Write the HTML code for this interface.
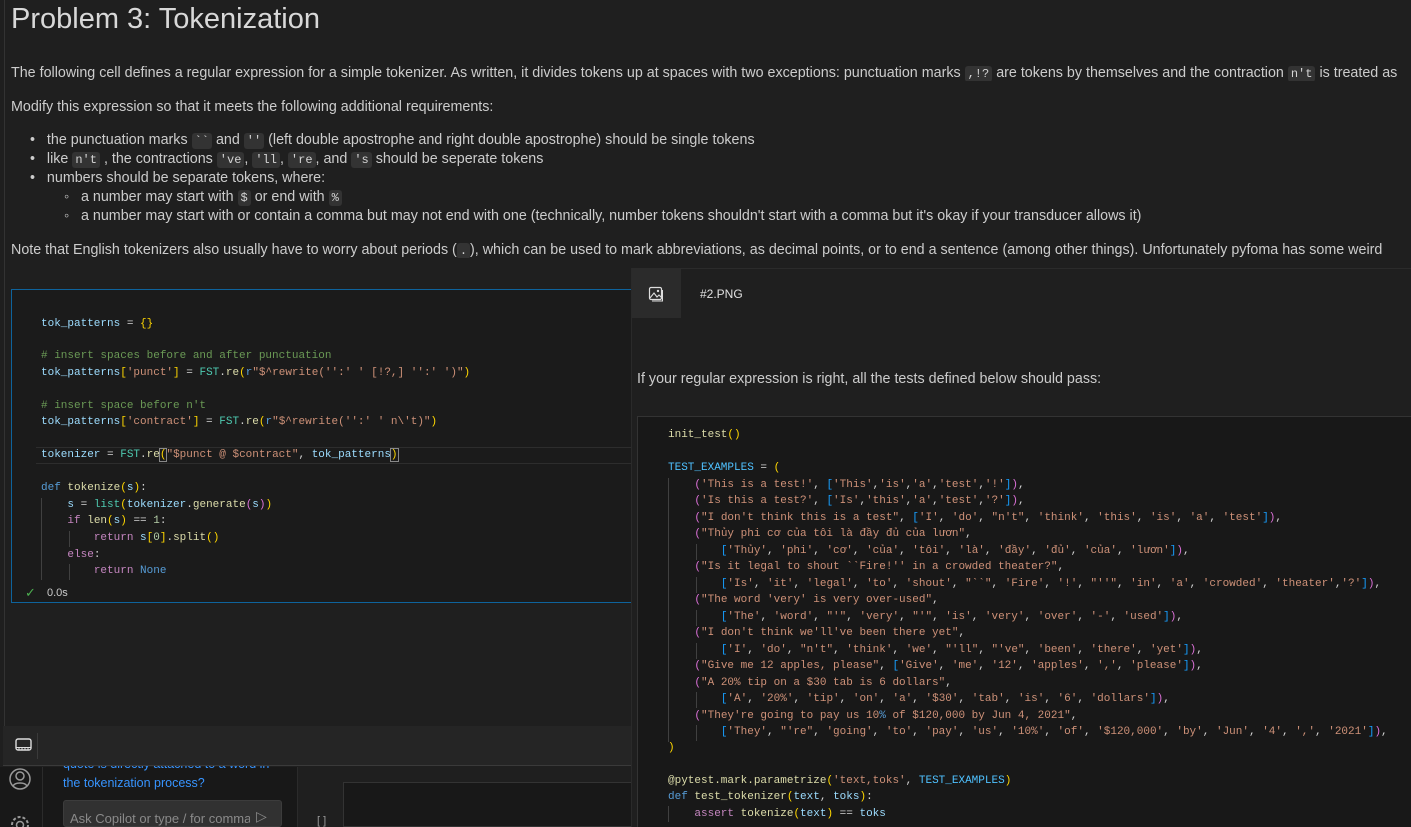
<!DOCTYPE html>
<html><head><meta charset="utf-8"><style>
*{margin:0;padding:0;box-sizing:border-box}
html,body{width:1411px;height:827px;overflow:hidden}
body{background:#1f1f1f;position:relative;font-family:"Liberation Sans",sans-serif;color:#cccccc}
.a{position:absolute;white-space:nowrap}
.p{font-size:14.3px;color:#cccccc}
.clip{width:1400px;overflow:hidden}
code{font-family:"Liberation Mono",monospace;font-size:12px;background:#333;border-radius:3px;padding:1px 3px;color:#d4d4d4}
.c{position:absolute;white-space:pre;font-family:"Liberation Mono","DejaVu Sans Mono",monospace;font-size:11px;line-height:14px;color:#d4d4d4}
.v{color:#9cdcfe}.s{color:#ce9178}.cm{color:#6a9955}.f{color:#dcdcaa}.k{color:#569cd6}.ct{color:#c586c0}.y{color:#ffd700}.pu{color:#da70d6}.b{color:#179fff}.n{color:#b5cea8}.cl{color:#4ec9b0}
.g{position:absolute;width:1px;background:#404040}
</style></head><body>
<div class="a" style="left:4px;top:0;width:1px;height:766px;background:#333"></div>
<div class="a" style="left:11px;top:3px;font-size:29px;color:#d8d8d8">Problem 3: Tokenization</div>
<div class="a p clip" style="left:11px;top:65px">The following cell defines a regular expression for a simple tokenizer. As written, it divides tokens up at spaces with two exceptions: punctuation marks <code>,!?</code> are tokens by themselves and the contraction <code>n't</code> is treated as</div>
<div class="a p" style="left:11px;top:99px">Modify this expression so that it meets the following additional requirements:</div>
<div class="a p" style="left:30px;top:132px">•&nbsp;&nbsp;&nbsp;the punctuation marks <code>``</code> and <code>''</code> (left double apostrophe and right double apostrophe) should be single tokens</div>
<div class="a p" style="left:30px;top:151px">•&nbsp;&nbsp;&nbsp;like <code>n't</code> , the contractions <code>'ve</code>, <code>'ll</code>, <code>'re</code>, and <code>'s</code> should be seperate tokens</div>
<div class="a p" style="left:30px;top:170px">•&nbsp;&nbsp;&nbsp;numbers should be separate tokens, where:</div>
<div class="a p" style="left:64px;top:189px">◦&nbsp;&nbsp;&nbsp;a number may start with <code>$</code> or end with <code>%</code></div>
<div class="a p" style="left:64px;top:208px">◦&nbsp;&nbsp;&nbsp;a number may start with or contain a comma but may not end with one (technically, number tokens shouldn't start with a comma but it's okay if your transducer allows it)</div>
<div class="a p clip" style="left:11px;top:242px">Note that English tokenizers also usually have to worry about periods (<code>.</code>), which can be used to mark abbreviations, as decimal points, or to end a sentence (among other things). Unfortunately pyfoma has some weird</div>

<!-- left code cell -->
<div class="a" style="left:11px;top:289px;width:625px;height:314px;background:#1b1b1b;border:1px solid #0e639c"></div>
<div class="a" style="left:36px;top:447px;width:596px;height:17px;border-top:1px solid #2d2d2d;border-bottom:1px solid #2d2d2d"></div>
<div class="g" style="left:41px;top:498px;height:82px"></div>
<div class="g" style="left:69px;top:531px;height:16px"></div>
<div class="g" style="left:69px;top:564px;height:16px"></div>
<div class="c" style="left:41px;top:317px"><span class="v">tok_patterns</span> = <span class="y">{}</span></div>
<div class="c" style="left:41px;top:349px"><span class="cm"># insert spaces before and after punctuation</span></div>
<div class="c" style="left:41px;top:366px"><span class="v">tok_patterns</span><span class="y">[</span><span class="s">'punct'</span><span class="y">]</span> = <span class="cl">FST</span>.<span class="f">re</span><span class="y">(</span><span class="k">r</span><span class="s">"$^rewrite('':' ' [!?,] '':' ')"</span><span class="y">)</span></div>
<div class="c" style="left:41px;top:399px"><span class="cm"># insert space before n't</span></div>
<div class="c" style="left:41px;top:415px"><span class="v">tok_patterns</span><span class="y">[</span><span class="s">'contract'</span><span class="y">]</span> = <span class="cl">FST</span>.<span class="f">re</span><span class="y">(</span><span class="k">r</span><span class="s">"$^rewrite('':' ' n\'t)"</span><span class="y">)</span></div>
<div class="c" style="left:41px;top:448px"><span class="v">tokenizer</span> = <span class="cl">FST</span>.<span class="f">re</span><span class="y" style="outline:1px solid #888">(</span><span class="s">"$punct @ $contract"</span>, <span class="v">tok_patterns</span><span class="y" style="outline:1px solid #888">)</span></div>
<div class="c" style="left:41px;top:481px"><span class="k">def</span> <span class="f">tokenize</span><span class="y">(</span><span class="v">s</span><span class="y">)</span>:</div>
<div class="c" style="left:41px;top:498px">    <span class="v">s</span> = <span class="cl">list</span><span class="y">(</span><span class="v">tokenizer</span>.<span class="f">generate</span><span class="pu">(</span><span class="v">s</span><span class="pu">)</span><span class="y">)</span></div>
<div class="c" style="left:41px;top:514px">    <span class="ct">if</span> <span class="f">len</span><span class="y">(</span><span class="v">s</span><span class="y">)</span> == <span class="n">1</span>:</div>
<div class="c" style="left:41px;top:531px">        <span class="ct">return</span> <span class="v">s</span><span class="y">[</span><span class="n">0</span><span class="y">]</span>.<span class="f">split</span><span class="y">()</span></div>
<div class="c" style="left:41px;top:548px">    <span class="ct">else</span>:</div>
<div class="c" style="left:41px;top:564px">        <span class="ct">return</span> <span class="k">None</span></div>
<div class="a" style="left:25px;top:585px;font-size:13px;color:#4caf50">✓</div>
<div class="a" style="left:47px;top:587px;font-size:11px;color:#ccc">0.0s</div>

<!-- bottom left -->
<div class="a" style="left:0;top:767px;width:43px;height:60px;background:#181818;border-right:1px solid #2b2b2b"></div>
<svg class="a" style="left:7px;top:766px" width="26" height="26" viewBox="0 0 26 26"><circle cx="13" cy="13" r="10" fill="none" stroke="#999" stroke-width="1.5"/><circle cx="13" cy="10" r="4" fill="none" stroke="#999" stroke-width="1.5"/><path d="M6 20c2-4 12-4 14 0" fill="none" stroke="#999" stroke-width="1.5"/></svg>
<svg class="a" style="left:7px;top:812px" width="26" height="15" viewBox="0 0 26 15"><circle cx="13" cy="13" r="8" fill="none" stroke="#999" stroke-width="2" stroke-dasharray="3 2"/><circle cx="13" cy="13" r="3.5" fill="none" stroke="#999" stroke-width="1.5"/></svg>
<div class="a" style="left:43px;top:767px;width:255px;height:60px;background:#181818;border-right:1px solid #2b2b2b"></div>
<div class="a" style="left:63px;top:757px;font-size:12.5px;color:#3794ff">quote is directly attached to a word in</div>
<div class="a" style="left:63px;top:776px;font-size:12.5px;color:#3794ff">the tokenization process?</div>
<div class="a" style="left:63px;top:800px;width:219px;height:27px;background:#313131;border:1px solid #3c3c3c;border-radius:3px"></div>
<div class="a" style="left:70px;top:811px;font-size:13px;color:#8a8a8a;width:180px;overflow:hidden">Ask Copilot or type / for commands</div>
<div class="a" style="left:256px;top:808px;font-size:14px;color:#8a8a8a">▷</div>
<div class="a" style="left:299px;top:767px;width:333px;height:60px;background:#1f1f1f"></div>
<div class="a" style="left:343px;top:782px;width:289px;height:45px;background:#181818;border:1px solid #333"></div>
<div class="a" style="left:317px;top:815px;font-size:11px;color:#999">[ ]</div>
<div class="a" style="left:3px;top:726px;width:629px;height:40px;background:#252525;border-bottom:1px solid #3a3a3a"></div>
<div class="a" style="left:37px;top:733px;width:1px;height:26px;background:#3a3a3a"></div>
<svg class="a" style="left:15px;top:738px" width="18" height="15" viewBox="0 0 18 15"><rect x="1" y="1" width="15" height="11" rx="2" fill="none" stroke="#ddd" stroke-width="1.4"/><path d="M1 9.5h15M4 9.5v2.5M7 9.5v2.5M10 9.5v2.5M13 9.5v2.5" stroke="#ddd" stroke-width="1"/></svg>

<!-- right panel -->
<div class="a" style="left:631px;top:268px;width:780px;height:559px;background:#1f1f1f;border-top:1px solid #2b2b2b;border-left:1px solid #2a2a2a"></div>
<div class="a" style="left:632px;top:269px;width:49px;height:49px;background:#2b2b2b"></div>
<svg class="a" style="left:648px;top:286px" width="16" height="16" viewBox="0 0 16 16"><rect x="1.5" y="1.5" width="12" height="12" rx="1.5" fill="none" stroke="#ddd" stroke-width="1.2"/><path d="M2 12l4-5 3 4 2-2 3 3" fill="none" stroke="#ddd" stroke-width="1.1"/><circle cx="10" cy="5" r="1.2" fill="#ddd"/><path d="M4 15h10.5V4" fill="none" stroke="#ddd" stroke-width="1"/></svg>
<div class="a" style="left:700px;top:287px;font-size:12px;color:#e0e0e0">#2.PNG</div>
<div class="a p" style="left:637px;top:371px">If your regular expression is right, all the tests defined below should pass:</div>
<div class="a" style="left:637px;top:416px;width:774px;height:411px;background:#181818;border:1px solid #333;border-bottom:none;border-right:none"></div>
<div class="g" style="left:668px;top:478px;height:264px"></div>
<div class="g" style="left:696px;top:544px;height:16px"></div>
<div class="g" style="left:696px;top:577px;height:16px"></div>
<div class="g" style="left:696px;top:610px;height:16px"></div>
<div class="g" style="left:696px;top:643px;height:16px"></div>
<div class="g" style="left:696px;top:692px;height:16px"></div>
<div class="g" style="left:696px;top:725px;height:16px"></div>
<div class="g" style="left:668px;top:806px;height:16px"></div>
<div class="c" style="left:668px;top:428px"><span class="f">init_test</span><span class="y">()</span></div>
<div class="c" style="left:668px;top:461px"><span class="b" style="color:#4fc1ff">TEST_EXAMPLES</span> = <span class="y">(</span></div>
<div class="c" style="left:668px;top:478px">    <span class="pu">(</span><span class="s">'This is a test!'</span>, <span class="b">[</span><span class="s">'This'</span>,<span class="s">'is'</span>,<span class="s">'a'</span>,<span class="s">'test'</span>,<span class="s">'!'</span><span class="b">]</span><span class="pu">)</span>,</div>
<div class="c" style="left:668px;top:494px">    <span class="pu">(</span><span class="s">'Is this a test?'</span>, <span class="b">[</span><span class="s">'Is'</span>,<span class="s">'this'</span>,<span class="s">'a'</span>,<span class="s">'test'</span>,<span class="s">'?'</span><span class="b">]</span><span class="pu">)</span>,</div>
<div class="c" style="left:668px;top:511px">    <span class="pu">(</span><span class="s">"I don't think this is a test"</span>, <span class="b">[</span><span class="s">'I'</span>, <span class="s">'do'</span>, <span class="s">"n't"</span>, <span class="s">'think'</span>, <span class="s">'this'</span>, <span class="s">'is'</span>, <span class="s">'a'</span>, <span class="s">'test'</span><span class="b">]</span><span class="pu">)</span>,</div>
<div class="c" style="left:668px;top:527px">    <span class="pu">(</span><span class="s">"Thủy phi cơ của tôi là đầy đủ của lươn"</span>,</div>
<div class="c" style="left:668px;top:544px">        <span class="b">[</span><span class="s">'Thủy'</span>, <span class="s">'phi'</span>, <span class="s">'cơ'</span>, <span class="s">'của'</span>, <span class="s">'tôi'</span>, <span class="s">'là'</span>, <span class="s">'đầy'</span>, <span class="s">'đủ'</span>, <span class="s">'của'</span>, <span class="s">'lươn'</span><span class="b">]</span><span class="pu">)</span>,</div>
<div class="c" style="left:668px;top:560px">    <span class="pu">(</span><span class="s">"Is it legal to shout ``Fire!'' in a crowded theater?"</span>,</div>
<div class="c" style="left:668px;top:577px">        <span class="b">[</span><span class="s">'Is'</span>, <span class="s">'it'</span>, <span class="s">'legal'</span>, <span class="s">'to'</span>, <span class="s">'shout'</span>, <span class="s">"``"</span>, <span class="s">'Fire'</span>, <span class="s">'!'</span>, <span class="s">"''"</span>, <span class="s">'in'</span>, <span class="s">'a'</span>, <span class="s">'crowded'</span>, <span class="s">'theater'</span>,<span class="s">'?'</span><span class="b">]</span><span class="pu">)</span>,</div>
<div class="c" style="left:668px;top:593px">    <span class="pu">(</span><span class="s">"The word 'very' is very over-used"</span>,</div>
<div class="c" style="left:668px;top:610px">        <span class="b">[</span><span class="s">'The'</span>, <span class="s">'word'</span>, <span class="s">"'"</span>, <span class="s">'very'</span>, <span class="s">"'"</span>, <span class="s">'is'</span>, <span class="s">'very'</span>, <span class="s">'over'</span>, <span class="s">'-'</span>, <span class="s">'used'</span><span class="b">]</span><span class="pu">)</span>,</div>
<div class="c" style="left:668px;top:626px">    <span class="pu">(</span><span class="s">"I don't think we'll've been there yet"</span>,</div>
<div class="c" style="left:668px;top:643px">        <span class="b">[</span><span class="s">'I'</span>, <span class="s">'do'</span>, <span class="s">"n't"</span>, <span class="s">'think'</span>, <span class="s">'we'</span>, <span class="s">"'ll"</span>, <span class="s">"'ve"</span>, <span class="s">'been'</span>, <span class="s">'there'</span>, <span class="s">'yet'</span><span class="b">]</span><span class="pu">)</span>,</div>
<div class="c" style="left:668px;top:659px">    <span class="pu">(</span><span class="s">"Give me 12 apples, please"</span>, <span class="b">[</span><span class="s">'Give'</span>, <span class="s">'me'</span>, <span class="s">'12'</span>, <span class="s">'apples'</span>, <span class="s">','</span>, <span class="s">'please'</span><span class="b">]</span><span class="pu">)</span>,</div>
<div class="c" style="left:668px;top:676px">    <span class="pu">(</span><span class="s">"A 20% tip on a $30 tab is 6 dollars"</span>,</div>
<div class="c" style="left:668px;top:692px">        <span class="b">[</span><span class="s">'A'</span>, <span class="s">'20%'</span>, <span class="s">'tip'</span>, <span class="s">'on'</span>, <span class="s">'a'</span>, <span class="s">'$30'</span>, <span class="s">'tab'</span>, <span class="s">'is'</span>, <span class="s">'6'</span>, <span class="s">'dollars'</span><span class="b">]</span><span class="pu">)</span>,</div>
<div class="c" style="left:668px;top:709px">    <span class="pu">(</span><span class="s">"They're going to pay us 10</span><span class="k">%</span><span class="s"> of $120,000 by Jun 4, 2021"</span>,</div>
<div class="c" style="left:668px;top:725px">        <span class="b">[</span><span class="s">'They'</span>, <span class="s">"'re"</span>, <span class="s">'going'</span>, <span class="s">'to'</span>, <span class="s">'pay'</span>, <span class="s">'us'</span>, <span class="s">'10%'</span>, <span class="s">'of'</span>, <span class="s">'$120,000'</span>, <span class="s">'by'</span>, <span class="s">'Jun'</span>, <span class="s">'4'</span>, <span class="s">','</span>, <span class="s">'2021'</span><span class="b">]</span><span class="pu">)</span>,</div>
<div class="c" style="left:668px;top:741px"><span class="y">)</span></div>
<div class="c" style="left:668px;top:774px"><span class="f">@pytest.mark.parametrize</span><span class="y">(</span><span class="s">'text,toks'</span>, <span class="v" style="color:#4fc1ff">TEST_EXAMPLES</span><span class="y">)</span></div>
<div class="c" style="left:668px;top:790px"><span class="k">def</span> <span class="f">test_tokenizer</span><span class="y">(</span><span class="v">text</span>, <span class="v">toks</span><span class="y">)</span>:</div>
<div class="c" style="left:668px;top:807px">    <span class="ct">assert</span> <span class="f">tokenize</span><span class="y">(</span><span class="v">text</span><span class="y">)</span> == <span class="v">toks</span></div>
</body></html>
